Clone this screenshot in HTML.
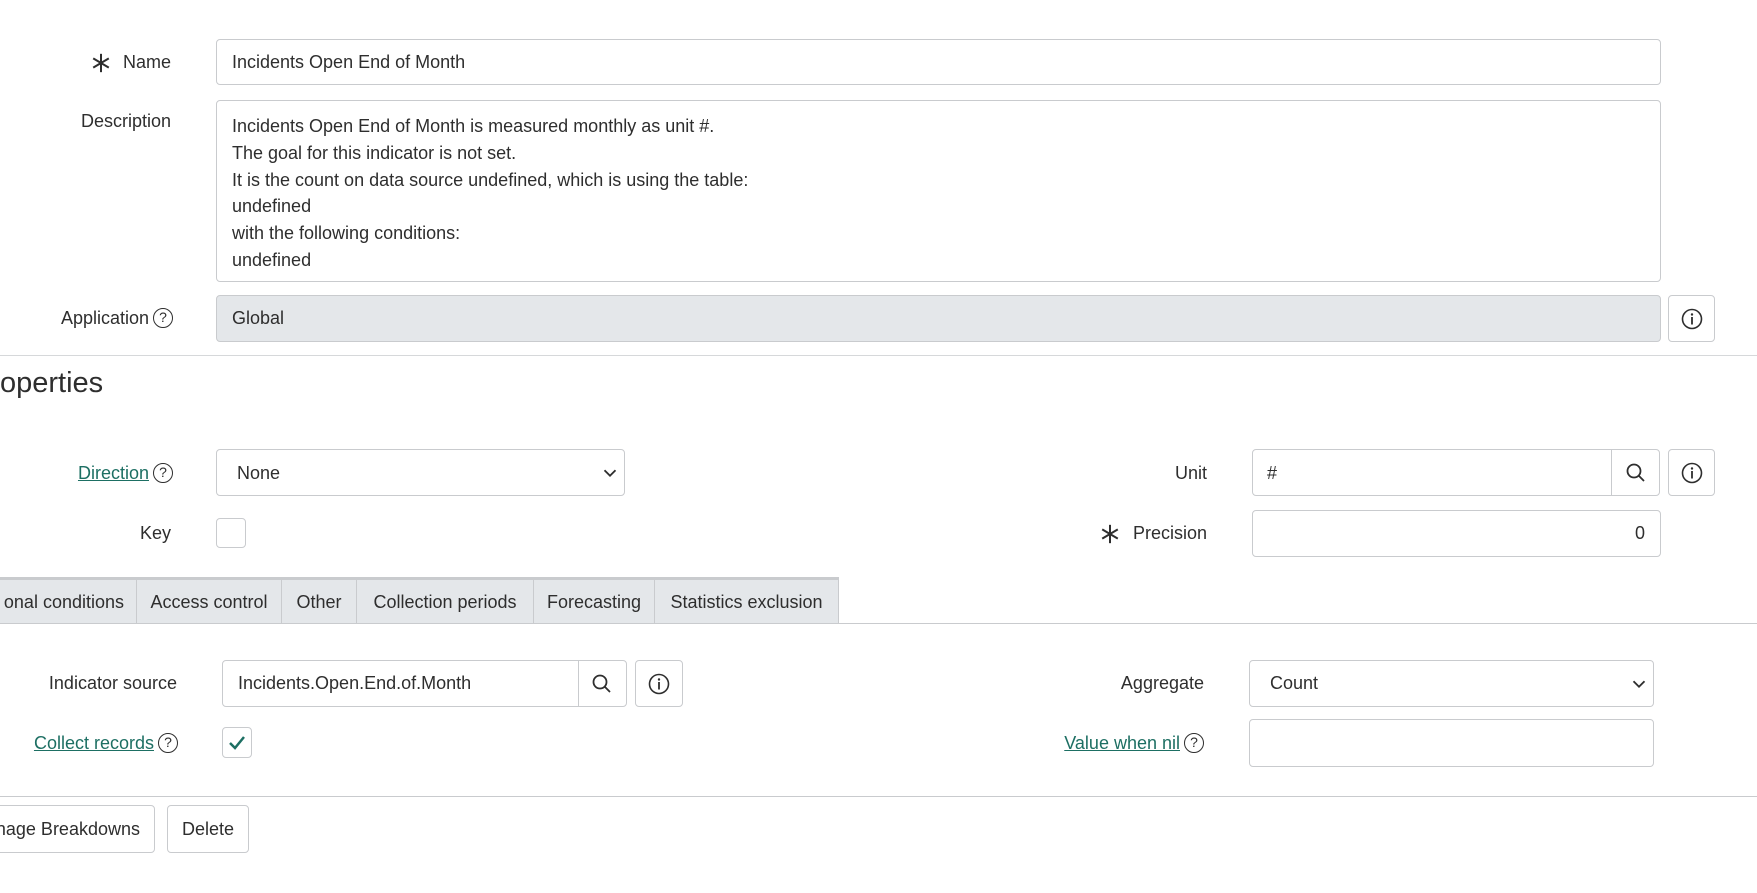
<!DOCTYPE html>
<html><head><meta charset="utf-8"><style>
*{box-sizing:border-box;margin:0;padding:0}
body{width:1757px;height:893px;background:#fff;font-family:"Liberation Sans",sans-serif;font-size:18px;color:#2e2e2e;position:relative;overflow:hidden}
.a{position:absolute}
.inp{position:absolute;border:1px solid #c9cbce;border-radius:4px;background:#fff}
.t{position:absolute;line-height:20px;white-space:nowrap}
.r{position:absolute;line-height:20px;white-space:nowrap;text-align:right}
a{color:#1d6f63;text-decoration:underline}
.q{display:inline-block;width:20px;height:20px;border:1.5px solid #2e2e2e;border-radius:50%;font-size:14px;line-height:17px;text-align:center;vertical-align:middle;margin-left:4px;margin-top:-3px}
.btn{position:absolute;border:1px solid #c9cbce;border-radius:4px;background:#fff;text-align:center}
.hr{position:absolute;left:0;width:1757px;height:1px;background:#d6d8da}
.tab{position:absolute;top:580px;height:44px;background:#e4e7ea;border-right:1px solid #c9cbce;line-height:44px;text-align:center;white-space:nowrap;overflow:hidden}
</style></head><body>
<svg width="0" height="0" style="position:absolute"><defs>
<symbol id="srch" viewBox="0 0 24 24"><circle cx="10" cy="10" r="6.5" fill="none" stroke="#2e2e2e" stroke-width="1.8"/><line x1="14.8" y1="14.8" x2="20" y2="20" stroke="#2e2e2e" stroke-width="1.8"/></symbol>
<symbol id="info" viewBox="0 0 24 24"><circle cx="12" cy="12" r="9.5" fill="none" stroke="#2e2e2e" stroke-width="1.6"/><circle cx="12" cy="7.5" r="1.2" fill="#2e2e2e"/><rect x="11.1" y="10" width="1.8" height="7.5" fill="#2e2e2e"/></symbol>
<symbol id="chev" viewBox="0 0 24 24"><path d="M6 9l6 6 6-6" fill="none" stroke="#2e2e2e" stroke-width="2"/></symbol>
<symbol id="ast" viewBox="0 0 24 24"><g stroke="#2e2e2e" stroke-width="2.2"><line x1="12" y1="2" x2="12" y2="22"/><line x1="3.5" y1="7" x2="20.5" y2="17"/><line x1="3.5" y1="17" x2="20.5" y2="7"/></g></symbol>
</defs></svg>

<!-- Name -->
<svg class="a" style="left:90px;top:52px" width="22" height="22"><use href="#ast"/></svg>
<div class="r" style="right:1586px;top:52px">Name</div>
<div class="inp" style="left:216px;top:39px;width:1445px;height:46px"></div>
<div class="t" style="left:232px;top:52px">Incidents Open End of Month</div>

<!-- Description -->
<div class="r" style="right:1586px;top:111px">Description</div>
<div class="inp" style="left:216px;top:100px;width:1445px;height:182px"></div>
<div class="t" style="left:232px;top:113px;line-height:26.8px">Incidents Open End of Month is measured monthly as unit #.<br>The goal for this indicator is not set.<br>It is the count on data source undefined, which is using the table:<br>undefined<br>with the following conditions:<br>undefined</div>

<!-- Application -->
<div class="r" style="right:1584px;top:308px">Application<span class="q">?</span></div>
<div class="inp" style="left:216px;top:295px;width:1445px;height:47px;background:#e4e7ea"></div>
<div class="t" style="left:232px;top:308px">Global</div>
<div class="btn" style="left:1668px;top:295px;width:47px;height:47px"><svg width="24" height="24" style="margin-top:11px"><use href="#info"/></svg></div>

<div class="hr" style="top:355px"></div>
<div class="t" style="left:0;top:366px;font-size:29px;line-height:34px">operties</div>

<!-- Direction -->
<div class="r" style="right:1584px;top:463px"><a>Direction</a><span class="q">?</span></div>
<div class="inp" style="left:216px;top:449px;width:409px;height:47px"></div>
<div class="t" style="left:237px;top:463px">None</div>
<svg class="a" style="left:599px;top:462px" width="22" height="22"><use href="#chev"/></svg>

<!-- Unit -->
<div class="r" style="right:550px;top:463px">Unit</div>
<div class="inp" style="left:1252px;top:449px;width:408px;height:47px"></div>
<div class="a" style="left:1611px;top:450px;width:1px;height:45px;background:#c9cbce"></div>
<div class="t" style="left:1267px;top:463px">#</div>
<svg class="a" style="left:1624px;top:461px" width="24" height="24"><use href="#srch"/></svg>
<div class="btn" style="left:1668px;top:449px;width:47px;height:47px"><svg width="24" height="24" style="margin-top:11px"><use href="#info"/></svg></div>

<!-- Key -->
<div class="r" style="right:1586px;top:523px">Key</div>
<div class="inp" style="left:216px;top:518px;width:30px;height:30px"></div>

<!-- Precision -->
<svg class="a" style="left:1099px;top:523px" width="22" height="22"><use href="#ast"/></svg>
<div class="r" style="right:550px;top:523px">Precision</div>
<div class="inp" style="left:1252px;top:510px;width:409px;height:47px"></div>
<div class="t" style="left:1635px;top:523px">0</div>

<!-- Tabs -->
<div class="a" style="left:0;top:577px;width:839px;height:4px;background:#c9cbce"></div>
<div class="tab" style="left:0;width:137px;text-align:right;padding-right:12px">onal conditions</div>
<div class="tab" style="left:137px;width:145px">Access control</div>
<div class="tab" style="left:282px;width:75px">Other</div>
<div class="tab" style="left:357px;width:177px">Collection periods</div>
<div class="tab" style="left:534px;width:121px">Forecasting</div>
<div class="tab" style="left:655px;width:184px">Statistics exclusion</div>
<div class="hr" style="top:623px;background:#c9cbce"></div>

<!-- Indicator source -->
<div class="r" style="right:1580px;top:673px">Indicator source</div>
<div class="inp" style="left:222px;top:660px;width:405px;height:47px"></div>
<div class="a" style="left:578px;top:661px;width:1px;height:45px;background:#c9cbce"></div>
<div class="t" style="left:238px;top:673px">Incidents.Open.End.of.Month</div>
<svg class="a" style="left:590px;top:672px" width="24" height="24"><use href="#srch"/></svg>
<div class="btn" style="left:635px;top:660px;width:48px;height:47px"><svg width="24" height="24" style="margin-top:11px"><use href="#info"/></svg></div>

<!-- Aggregate -->
<div class="r" style="right:553px;top:673px">Aggregate</div>
<div class="inp" style="left:1249px;top:660px;width:405px;height:47px"></div>
<div class="t" style="left:1270px;top:673px">Count</div>
<svg class="a" style="left:1628px;top:673px" width="22" height="22"><use href="#chev"/></svg>

<!-- Collect records -->
<div class="r" style="right:1579px;top:733px"><a>Collect records</a><span class="q">?</span></div>
<div class="inp" style="left:222px;top:727px;width:30px;height:31px"></div>
<svg class="a" style="left:227px;top:733px" width="20" height="20"><path d="M3 10l5 5 9-11" fill="none" stroke="#1d6f63" stroke-width="2.5"/></svg>

<!-- Value when nil -->
<div class="r" style="right:553px;top:733px"><a>Value when nil</a><span class="q">?</span></div>
<div class="inp" style="left:1249px;top:719px;width:405px;height:48px"></div>

<div class="hr" style="top:796px;background:#c9cbce"></div>

<div class="btn" style="left:-10px;top:805px;width:165px;height:48px;line-height:46px;text-align:right;padding-right:14px">nage Breakdowns</div>
<div class="btn" style="left:167px;top:805px;width:82px;height:48px;line-height:46px">Delete</div>
</body></html>
